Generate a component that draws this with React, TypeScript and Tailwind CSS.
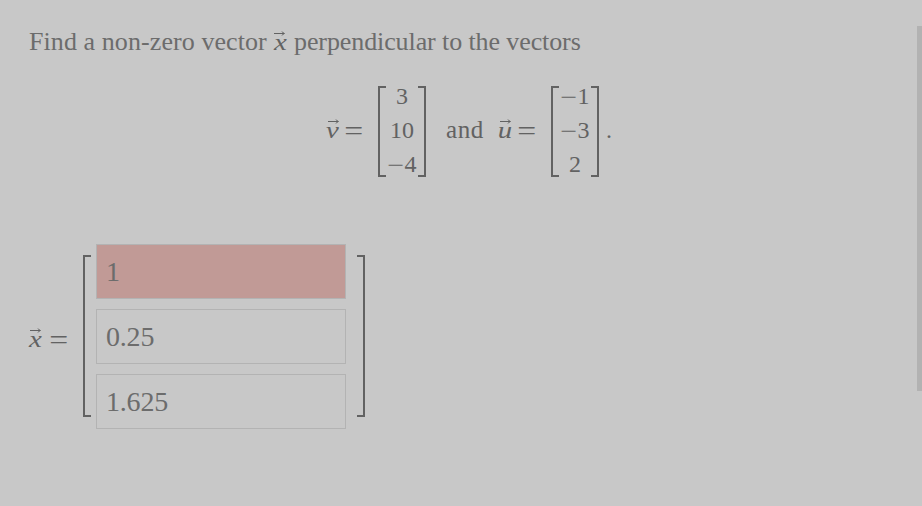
import { useState } from 'react';
import type { ReactNode } from 'react';
import clsx from 'clsx';

interface VecProps {
  name: string;
  className?: string;
}

// Italic letter with a vector arrow over it
function Vec({ name, className }: VecProps) {
  return (
    <span className={clsx('relative inline-block h-[34px] text-center text-[24px] italic leading-[34px] text-[#626262]', className)}>
      <span className="inline-block scale-x-[1.2]">{name}</span>
      <svg className="absolute left-[3px] top-[6px] h-[5px] w-[11px]" viewBox="0 0 11 5" fill="none" stroke="currentColor">
        <path d="M0 2.5h10M8 .5c.5 1 1.2 1.7 2.5 2-1.3.3-2 1-2.5 2" strokeWidth="1" />
      </svg>
    </span>
  );
}

function Equals({ className }: { className?: string }) {
  return (
    <span className={clsx('flex h-[34px] w-[17px] justify-center text-[24px] leading-[34px]', className)}>
      <span className="inline-block translate-y-px scale-x-[1.4] scale-y-110">=</span>
    </span>
  );
}

function Minus() {
  return <span className="inline-block w-[17px] translate-y-px text-center"><span className="inline-block scale-x-[1.25]">−</span></span>;
}

interface BracketProps {
  children: ReactNode;
  barClass: string;
  bodyClass: string;
}

function Brackets({ children, barClass, bodyClass }: BracketProps) {
  return (
    <div className="flex items-start">
      <div className={clsx('w-2 shrink-0 border-y-2 border-l-2 border-[#626262]', barClass)} />
      <div className={clsx('shrink-0', bodyClass)}>{children}</div>
      <div className={clsx('w-2 shrink-0 border-y-2 border-r-2 border-[#626262]', barClass)} />
    </div>
  );
}

function Column({ values }: { values: number[] }) {
  return (
    <Brackets barClass="mt-[7px] h-[91px]" bodyClass="flex w-8 flex-col items-center">
      {values.map((n, i) => (
        <span key={i} className="h-[34px] whitespace-nowrap leading-[34px]">
          {n < 0 && <Minus />}
          {Math.abs(n)}
        </span>
      ))}
    </Brackets>
  );
}

export default function App() {
  const [answers, setAnswers] = useState(['1', '0.25', '1.625']);

  const updateAnswer = (index: number, value: string) => {
    setAnswers(answers.map((a, i) => (i === index ? value : a)));
  };

  return (
    <div className="flex h-[506px] w-[922px] overflow-hidden bg-[#c8c8c8] font-['Liberation_Serif',serif] text-[#6c6c6c]">
      <main className="w-[917px] shrink-0">
        <p className="flex h-[60px] items-end whitespace-pre pl-[29px] text-[26px] leading-[36px]">
          <span className="w-[242px] tracking-[0.08px]">Find a non-zero vector</span>
          <Vec name="x" className="mb-px w-[19px]" />
          <span className="ml-1 tracking-[-0.1px]">perpendicular to the vectors</span>
        </p>

        <div className="flex items-start pl-[325px] pt-[19px] text-[24px] text-[#626262]">
          <Vec name="v" className="mt-[34px] w-[14px]" />
          <Equals className="ml-[6px] mt-[34px]" />
          <div className="ml-4"><Column values={[3, 10, -4]} /></div>
          <span className="ml-5 mt-[34px] w-[39px] text-[25px] leading-[34px] tracking-[0.6px]">and</span>
          <Vec name="u" className="ml-3 mt-[34px] w-[15px]" />
          <Equals className="ml-[6px] mt-[34px]" />
          <div className="ml-4"><Column values={[-1, -3, 2]} /></div>
          <span className="ml-[7px] mt-[34px] leading-[34px]">.</span>
        </div>

        <div className="mt-[63px] flex items-start pl-[27px] text-[#626262]">
          <Vec name="x" className="mt-[78px] w-[17px]" />
          <Equals className="ml-[6px] mt-[78px]" />
          <div className="ml-4">
            <Brackets barClass="mt-[11px] h-[162px]" bodyClass="flex w-[266px] flex-col gap-[10px] pl-[5px]">
              {answers.map((answer, i) => (
                <input
                  key={i}
                  value={answer}
                  onChange={e => updateAnswer(i, e.target.value)}
                  className={clsx(
                    'h-[55px] w-[250px] border border-[#b3b3b3] px-[9px] text-[28px] tracking-[-0.2px] text-[#6c6c6c] outline-none',
                    i === 0 ? 'bg-[#c19a96]' : 'bg-transparent'
                  )}
                />
              ))}
            </Brackets>
          </div>
        </div>
      </main>

      {/* Scrollbar thumb */}
      <div className="mt-[26px] h-[365px] w-[5px] bg-[#b2b2b2]" />
    </div>
  );
}
